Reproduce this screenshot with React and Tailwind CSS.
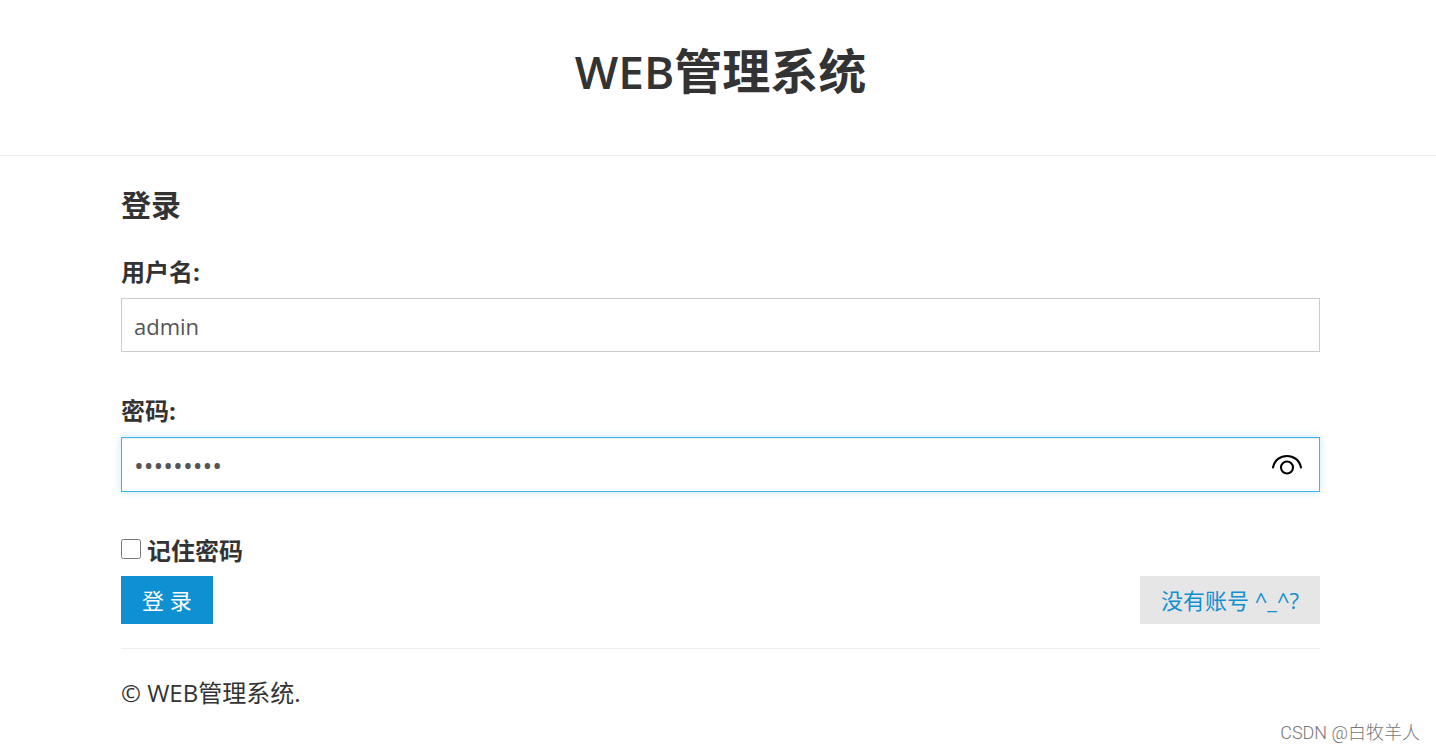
import { useState } from "react";

const EyeIcon = () => (
  <svg
    width="32"
    height="22"
    viewBox="0 0 32 22"
    fill="none"
    stroke="#000"
    strokeWidth="2.1"
    strokeLinecap="round"
  >
    <path d="M2 13.500C3.500 6 9.500 2 16 2S28.500 6 30 13.500" />
    <circle cx="16" cy="13.500" r="6" />
  </svg>
);

const Login = () => {
  const [username, setUsername] = useState("admin");
  const [password, setPassword] = useState("admin1234");
  const [showPassword, setShowPassword] = useState(false);
  const [remember, setRemember] = useState(false);

  const handleSubmit = (e) => {
    e.preventDefault();
  };

  return (
    <form onSubmit={handleSubmit} className="flex flex-col">
      <label htmlFor="username" className="mb-2 text-2xl leading-9 font-bold">
        用户名:
      </label>
      <input
        id="username"
        type="text"
        className="h-[54px] w-full border border-[#ccc] px-3 pt-[2px] text-[22px] text-[#555] outline-none"
        value={username}
        onChange={(e) => setUsername(e.target.value)}
      />

      <label htmlFor="password" className="mt-[41px] mb-2 text-2xl leading-9 font-bold">
        密码:
      </label>
      <div className="flex h-[55px] items-center border border-[#3bb4f2] pr-4 shadow-[inset_0_1px_1px_rgba(0,0,0,0.075),0_0_8px_rgba(59,180,242,0.3)]">
        <input
          id="password"
          type={showPassword ? "text" : "password"}
          className="h-full min-w-0 flex-1 px-3 text-[26px] text-[#555] outline-none"
          value={password}
          onChange={(e) => setPassword(e.target.value)}
        />
        <button
          type="button"
          aria-label="显示密码"
          onClick={() => setShowPassword(!showPassword)}
        >
          <EyeIcon />
        </button>
      </div>

      <div className="mt-[41px] flex items-start gap-[6px]">
        <input
          id="remember"
          type="checkbox"
          className="mt-[6px] h-5 w-5"
          checked={remember}
          onChange={(e) => setRemember(e.target.checked)}
        />
        <label htmlFor="remember" className="text-2xl leading-9 font-bold">
          记住密码
        </label>
      </div>

      <div className="mt-[7px] flex items-center justify-between">
        <button type="submit" className="h-12 bg-[#0e90d2] px-[21px] text-[22px] text-white">
          登 录
        </button>
        <button type="button" className="h-12 bg-[#e6e6e6] px-[21px] text-[22px] text-[#0e90d2]">
          没有账号 ^_^?
        </button>
      </div>
    </form>
  );
};

const App = () => {
  return (
    <div className="relative min-h-screen bg-white font-['Open_Sans','Noto_Sans_CJK_SC',sans-serif] text-[#333]">
      <header className="border-b border-[#eee] pt-[35px] pb-12 pl-[5px] text-center">
        <h1 className="text-5xl leading-[72px] font-bold">
          <span className="text-[46px] font-semibold">WEB</span>管理系统
        </h1>
      </header>

      <main className="pt-[25px] pr-[116px] pl-[121px]">
        <h3 className="mb-[25px] text-[30px] leading-[48px] font-bold">登录</h3>
        <Login />
        <hr className="mt-6 border-[#eee]" />
        <p className="mt-[26px] text-2xl leading-9">© WEB管理系统.</p>
      </main>

      <div className="absolute right-4 bottom-1 text-lg leading-7 font-light text-[#777] font-['Roboto','Noto_Sans_CJK_SC',sans-serif]">
        CSDN @白牧羊人
      </div>
    </div>
  );
};

export default App;
